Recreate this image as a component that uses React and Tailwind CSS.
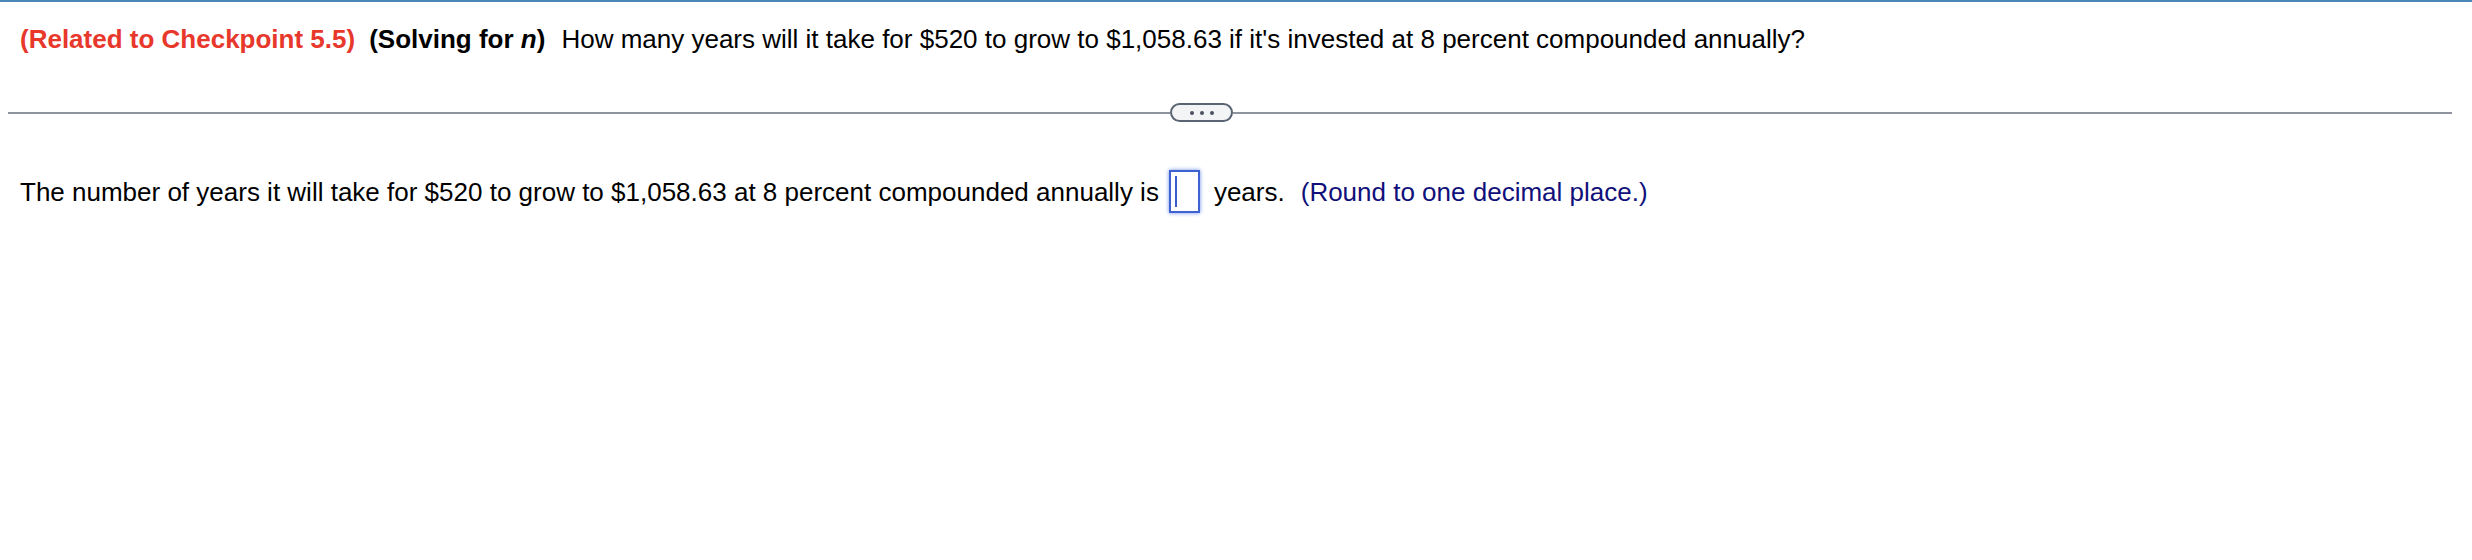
import React from "react";

function Dots() {
  return (
    <button
      type="button"
      className="flex h-[19px] w-[63px] shrink-0 items-center justify-center gap-[6px] rounded-full border-2 border-[#5b6473] bg-[#f3f4f6]"
    >
      <span className="h-[4px] w-[4px] rounded-full bg-[#4b5160]" />
      <span className="h-[4px] w-[4px] rounded-full bg-[#4b5160]" />
      <span className="h-[4px] w-[4px] rounded-full bg-[#4b5160]" />
    </button>
  );
}

export default function App() {
  return (
    <div className="min-h-[560px] w-full border-t-2 border-[#4a87b8] bg-white font-['Liberation_Sans',Arial,sans-serif] text-[26px] leading-[30px] text-black">
      {/* question */}
      <p className="pl-5 pt-[22px]">
        <span className="font-bold text-[#e8372b]">(Related to Checkpoint 5.5)</span>
        <span className="ml-[14px] font-bold">
          (Solving for <i>n</i>)
        </span>
        <span className="ml-[16px]">
          How many years will it take for $520 to grow to $1,058.63 if it's invested at 8 percent compounded annually?
        </span>
      </p>

      {/* divider */}
      <div className="ml-2 mr-5 mt-[49px] flex items-center">
        <div className="h-[2px] w-[1162px] bg-[#8e939e]" />
        <Dots />
        <div className="h-[2px] flex-1 bg-[#8e939e]" />
      </div>

      {/* answer */}
      <div className="mt-[48px] flex items-center pl-5">
        <span>
          The number of years it will take for $520 to grow to $1,058.63 at 8 percent compounded annually is
        </span>
        <span className="ml-[10px] flex h-[43px] w-[31px] items-center border-2 border-[#3f62d2] pl-[4px] shadow-[0_0_4px_#6f8ee8]">
          <span className="h-[31px] w-[2px] bg-[#3a5ccc]" />
        </span>
        <span className="ml-[14px]">years.</span>
        <span className="ml-[16px] text-[#10107a]">(Round to one decimal place.)</span>
      </div>
    </div>
  );
}
